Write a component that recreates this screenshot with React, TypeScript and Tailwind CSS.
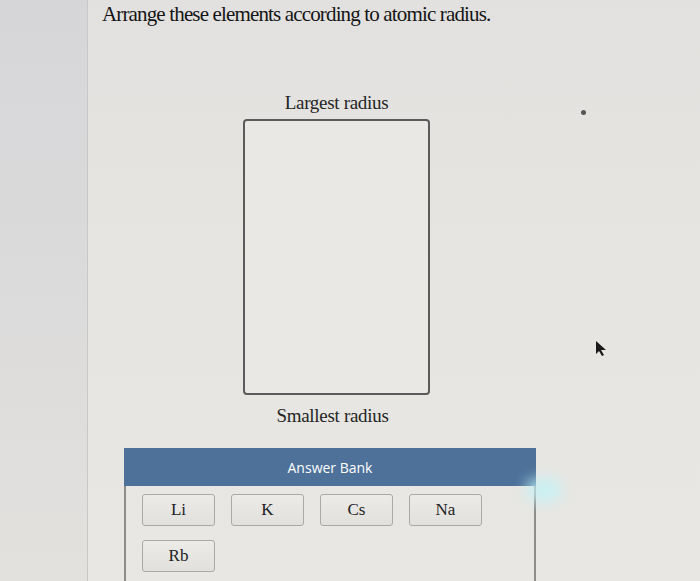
import React from "react";

const serif = { fontFamily: '"Liberation Serif", "Times New Roman", serif' };

const Chip = ({ label }: { label: string }) => (
	<div
		className="w-[73px] h-[32px] flex items-center justify-center rounded-[3px] border border-[#a9a9a6] bg-gradient-to-b from-[#ecebe8] to-[#e1e0dc] text-[17px] text-[#222]"
		style={serif}
	>
		{label}
	</div>
);

const App = () => {
	const bank = ["Li", "K", "Cs", "Na", "Rb"];

	return (
		<div className="w-[700px] h-[581px] flex overflow-hidden bg-[#e5e4e1]">
			{/* left gutter */}
			<div className="w-[88px] shrink-0 bg-gradient-to-b from-[#d6d5d8] to-[#e2e1de] border-r border-[#c9c8c6]" />

			<div className="relative flex-1 bg-gradient-to-b from-[#e2e1df] via-[#e6e5e2] to-[#e8e7e3]">
				<h1
					className="pl-[14px] pt-[1px] text-[21px] leading-[27px] tracking-[-0.85px] text-[#151515]"
					style={serif}
				>
					Arrange these elements according to atomic radius.
				</h1>

				{/* ranking column */}
				<div className="ml-[155px] mt-[63px] w-[187px] flex flex-col items-center">
					<div className="text-[19px] leading-[24px] tracking-[-0.3px] text-[#252525]" style={serif}>
						Largest radius
					</div>
					<div className="mt-[4px] w-[187px] h-[276px] rounded-[4px] border-2 border-[#5b5b5b] bg-[#e9e8e5]" />
					<div className="mt-[9px] ml-[-8px] text-[19px] leading-[24px] tracking-[-0.3px] text-[#252525]" style={serif}>
						Smallest radius
					</div>
				</div>

				{/* answer bank */}
				<div className="ml-[36px] mt-[20px] w-[412px]">
					<div
						className="h-[38px] flex items-center justify-center bg-[#4d7199] text-white text-[14px]"
						style={{ fontFamily: '"Open Sans", "Noto Sans", sans-serif' }}
					>
						Answer Bank
					</div>
					<div className="h-[120px] border-x-2 border-[#8d8d8b] px-[16px] pt-[8px] flex flex-wrap content-start gap-x-[16px] gap-y-[14px]">
						{bank.map((el) => (
							<Chip key={el} label={el} />
						))}
					</div>
				</div>

				{/* screen glare */}
				<div className="absolute left-[438px] top-[478px] w-[36px] h-[24px] rounded-full bg-[#c4f3f6] blur-[7px] opacity-80" />

				{/* stray dot and mouse pointer */}
				<div className="absolute left-[493px] top-[110px] w-[5px] h-[5px] rounded-full bg-[#555]" />
				<svg
					className="absolute left-[506px] top-[340px]"
					width="14"
					height="18"
					viewBox="0 0 14 18"
				>
					<path d="M2 1 L2 14 L5 11 L8 16 L10 15 L7 10 L12 10 Z" fill="#1a1a1a" />
				</svg>
			</div>
		</div>
	);
};

export default App;
